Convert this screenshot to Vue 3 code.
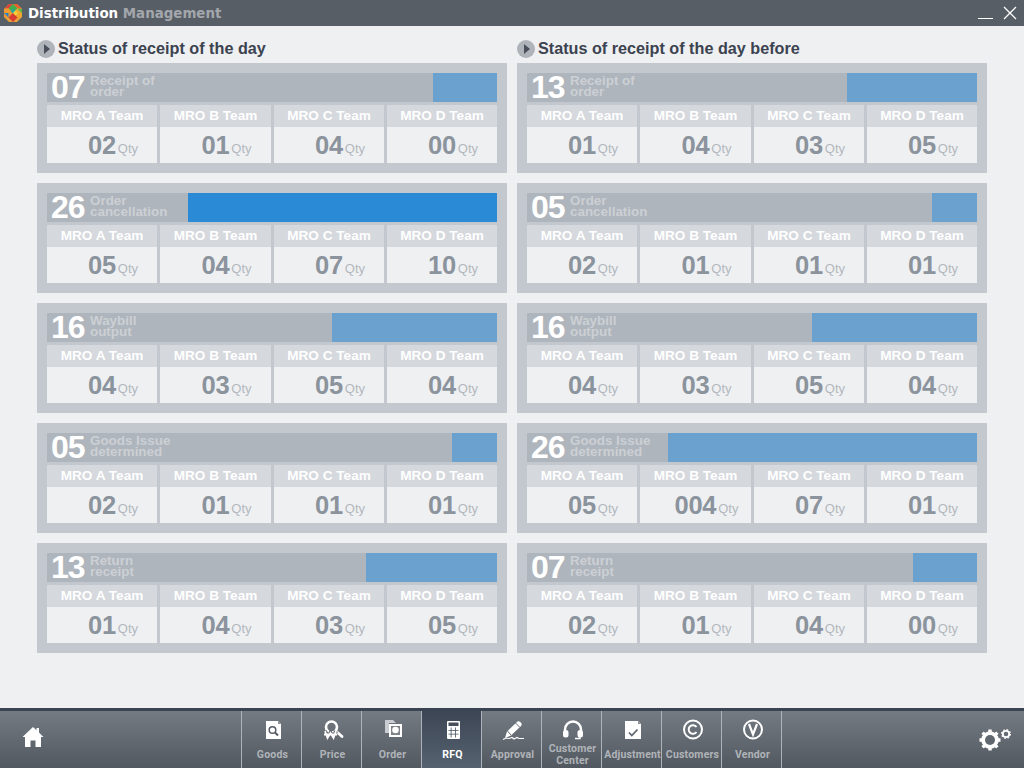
<template>
  <div class="app">
    <header class="titlebar">
      <svg class="logo" viewBox="0 0 18 18">
        <polygon points="5,0 13,0 18,5 18,13 13,18 5,18 0,13 0,5" fill="#e8a13a" />
        <polygon points="5,0 9,0 5,4.500 0.500,4.500" fill="#d8463a" />
        <polygon points="9,0 13,0 17.500,4.500 13.500,4.500" fill="#e9632c" />
        <polygon points="9,0 13.500,4.500 9,9 4.500,4.500" fill="#3fae4f" />
        <polygon points="0,5 4.500,4.500 9,9 4.500,13.500 0,13" fill="#ef9a2f" />
        <polygon points="18,5 13.500,4.500 9,9 13.500,13.500 18,13" fill="#f0a92e" />
        <polygon points="9,9 13.500,13.500 9,18 4.500,13.500" fill="#d83a34" />
        <polygon points="0,9 4.500,9 4.500,13.500" fill="#2f7fc4" />
        <polygon points="6.500,7 9,4.500 11.500,7 9,9.500" fill="#2aa5a0" />
        <polygon points="9,9 11.500,6.500 14,9 11.500,11.500" fill="#f4d23c" />
        <polygon points="13.500,4.500 18,5 18,9 15.500,7" fill="#57b847" />
      </svg>
      <span class="brand">Distribution <em>Management</em></span>
      <div class="winbtns">
        <span class="minimize"></span>
        <svg class="close" viewBox="0 0 14 14"><path d="M1 1 13 13M13 1 1 13" stroke="#fff" stroke-width="1.3" fill="none" /></svg>
      </div>
    </header>

    <main class="content">
      <section v-for="col in columns" :key="col.title" class="column">
        <h2 class="coltitle">
          <span class="arrow"></span>
          {{ col.title }}
        </h2>
        <div v-for="card in col.cards" :key="card.label" class="card">
          <div class="summary">
            <span class="total">{{ card.total }}</span>
            <span class="label">{{ card.label[0] }}<br />{{ card.label[1] }}</span>
            <span class="fill" :class="{ strong: card.strong }" :style="{ width: card.bar + 'px' }"></span>
          </div>
          <div class="teams">
            <div v-for="(qty, i) in card.qty" :key="i" class="team">
              <div class="teamname">{{ teams[i] }}</div>
              <div class="teamqty"><b>{{ qty }}</b><span>Qty</span></div>
            </div>
          </div>
        </div>
      </section>
    </main>

    <footer class="dock">
      <svg class="home" viewBox="0 0 22 22">
        <path fill="#fff" d="M11 1 14.5 4.2V2H17V6.5L21.5 11H19V21H13.5V14.5H8.5V21H3V11H.5Z" />
      </svg>
      <nav class="tabs">
        <button v-for="t in tabs" :key="t.name" class="tab" :class="{ active: t.name === 'RFQ' }">
          <svg class="tabicon" viewBox="0 0 24 24" v-html="t.icon"></svg>
          <span class="tabname">{{ t.name }}</span>
        </button>
      </nav>
      <svg class="gears" viewBox="0 0 36 24">
        <circle cx="13" cy="13" r="6.5" fill="none" stroke="#fff" stroke-width="4.5" />
        <path stroke="#fff" stroke-width="3.4" d="M13 2.500V23.500M2.500 13H23.500M5.600 5.600 20.400 20.400M20.400 5.600 5.600 20.400" />
        <circle cx="13" cy="13" r="5" fill="#60676f" />
        <circle cx="29" cy="7" r="3.200" fill="none" stroke="#fff" stroke-width="1.800" />
        <circle cx="29" cy="7" r="4.400" fill="none" stroke="#fff" stroke-width="1.200" stroke-dasharray="1.700 1.750" />
      </svg>
    </footer>
  </div>
</template>

<script setup>
const teams = ['MRO A Team', 'MRO B Team', 'MRO C Team', 'MRO D Team']

const columns = [
  {
    title: 'Status of receipt of the day',
    cards: [
      { total: '07', label: ['Receipt of', 'order'], bar: 64, qty: ['02', '01', '04', '00'] },
      { total: '26', label: ['Order', 'cancellation'], bar: 309, strong: true, qty: ['05', '04', '07', '10'] },
      { total: '16', label: ['Waybill', 'output'], bar: 165, qty: ['04', '03', '05', '04'] },
      { total: '05', label: ['Goods Issue', 'determined'], bar: 45, qty: ['02', '01', '01', '01'] },
      { total: '13', label: ['Return', 'receipt'], bar: 131, qty: ['01', '04', '03', '05'] }
    ]
  },
  {
    title: 'Status of receipt of the day before',
    cards: [
      { total: '13', label: ['Receipt of', 'order'], bar: 130, qty: ['01', '04', '03', '05'] },
      { total: '05', label: ['Order', 'cancellation'], bar: 45, qty: ['02', '01', '01', '01'] },
      { total: '16', label: ['Waybill', 'output'], bar: 165, qty: ['04', '03', '05', '04'] },
      { total: '26', label: ['Goods Issue', 'determined'], bar: 309, qty: ['05', '004', '07', '01'] },
      { total: '07', label: ['Return', 'receipt'], bar: 64, qty: ['02', '01', '04', '00'] }
    ]
  }
]

const tabs = [
  {
    name: 'Goods',
    icon: '<path fill="#fff" d="M5 3H17L20 6V21H5Z"/><path fill="#8b9096" d="M17 3 20 6H17Z"/><circle cx="11.500" cy="12" r="3.300" fill="none" stroke="#555b63" stroke-width="1.500"/><path stroke="#555b63" stroke-width="2" d="M14 14.500 17 17.500"/>'
  },
  {
    name: 'Price',
    icon: '<circle cx="10.500" cy="9" r="5.500" fill="none" stroke="#fff" stroke-width="2.600"/><path stroke="#fff" stroke-width="2.800" stroke-linecap="round" d="M16 14 21 18.500"/><path fill="none" stroke="#666c74" stroke-width="4" d="M4 13 6.500 20 9.500 15 12.500 20 15 13"/><path fill="none" stroke="#fff" stroke-width="1.800" d="M4 13 6.500 20 9.500 15 12.500 20 15 13M3 16.500H16"/>'
  },
  {
    name: 'Order',
    icon: '<path fill="#c9ccd0" d="M4 2H12L15 5H8V15H4Z"/><rect x="8" y="6" width="13" height="13" fill="#fff"/><rect x="10" y="8" width="9" height="9" fill="#7d8289"/><circle cx="14.500" cy="12" r="3.300" fill="#fff"/>'
  },
  {
    name: 'RFQ',
    icon: '<rect x="6" y="3" width="13" height="18" rx="1" fill="#fff"/><path fill="#46505d" d="M7.500 4.500H17.500V8H7.500ZM9.700 9.500H10.500V19.500H9.700ZM14 9.500H14.800V19.500H14ZM7.500 12.300H17.500V13H7.500ZM7.500 15.800H17.500V16.500H7.500Z"/>'
  },
  {
    name: 'Approval',
    icon: '<path fill="#fff" d="M16.500 3.500C18 2.500 20 4 20.500 5.500 21 6.500 20.500 7.500 20 8L10 17.500 4 20 6 13.500Z"/><path stroke="#666c74" stroke-width="1" d="M14.500 5 19 9.500M6.500 13 10 17"/><path fill="none" stroke="#fff" stroke-width="1.200" d="M2 21.500 5 20 8 20.500 11 19.500 13 21 16 19.500 18 20.500H23"/>'
  },
  {
    name: 'Customer Center',
    icon: '<path fill="none" stroke="#fff" stroke-width="2.400" d="M4 14V11.500A8 8 0 0 1 20 11.500V14"/><rect x="2" y="12" width="5.500" height="7.500" rx="2.500" fill="#fff"/><rect x="16.500" y="12" width="5.500" height="7.500" rx="2.500" fill="#fff"/><path fill="none" stroke="#fff" stroke-width="1.400" d="M19 19V20.500H14"/>'
  },
  {
    name: 'Adjustment',
    icon: '<path fill="#fff" d="M4 3H17L20 6V21H4Z"/><path fill="#8b9096" d="M17 3 20 6H17Z"/><path fill="none" stroke="#5f666e" stroke-width="1.800" d="M8 14.500 10.800 17.500 16.500 11.500"/>'
  },
  {
    name: 'Customers',
    icon: '<circle cx="12" cy="11.500" r="9" fill="none" stroke="#fff" stroke-width="2"/><path fill="none" stroke="#fff" stroke-width="2" d="M15.500 9A4.300 4.300 0 1 0 15.500 14"/>'
  },
  {
    name: 'Vendor',
    icon: '<circle cx="12" cy="11.500" r="9" fill="none" stroke="#fff" stroke-width="2"/><path fill="none" stroke="#fff" stroke-width="2.200" d="M8 6 12 16.500 16 6"/>'
  }
]
</script>

<style>
html,
body {
  margin: 0;
  background: #eff0f2;
}
</style>

<style scoped>
.app {
  width: 1024px;
  height: 768px;
  display: flex;
  flex-direction: column;
  overflow: hidden;
  background: #eff0f2;
  font-family: "Liberation Sans", Arial, sans-serif;
}
.titlebar {
  height: 26px;
  flex: none;
  display: flex;
  align-items: center;
  padding-left: 4px;
  background: #585e66;
}
.logo {
  width: 18px;
  height: 18px;
  margin-right: 6px;
}
.brand {
  font-family: "DejaVu Sans", sans-serif;
  font-weight: bold;
  font-size: 13.4px;
  color: #fff;
}
.brand em {
  font-style: normal;
  color: #a3a7ac;
}
.winbtns {
  margin-left: auto;
  display: flex;
  align-items: center;
  gap: 10px;
  padding-right: 7px;
}
.minimize {
  width: 15px;
  height: 1px;
  margin-top: 11px;
  background: #fff;
}
.close {
  width: 14px;
  height: 14px;
}
.content {
  flex: 1;
  display: flex;
  gap: 10px;
  padding: 12px 0 0 37px;
}
.column {
  width: 470px;
  display: flex;
  flex-direction: column;
  gap: 10px;
}
.coltitle {
  margin: 0 0 -6px;
  height: 21px;
  display: flex;
  align-items: center;
  gap: 3px;
  font-size: 16.2px;
  font-weight: bold;
  color: #3c4350;
}
.arrow {
  position: relative;
  width: 18px;
  height: 18px;
  border-radius: 50%;
  background: #afb4bb;
}
.arrow::after {
  content: "";
  position: absolute;
  left: 7px;
  top: 4px;
  border-left: 6px solid #4a505a;
  border-top: 5px solid transparent;
  border-bottom: 5px solid transparent;
}
.card {
  height: 110px;
  box-sizing: border-box;
  padding: 10px;
  background: #c3c8cf;
}
.summary {
  height: 29px;
  display: flex;
  align-items: center;
  background: #afb5bc;
}
.total {
  width: 43px;
  flex: none;
  box-sizing: border-box;
  padding-left: 4px;
  font-size: 32px;
  font-weight: bold;
  letter-spacing: -1px;
  color: #fff;
}
.label {
  margin-top: -2px;
  font-size: 13.4px;
  line-height: 10.5px;
  font-weight: bold;
  color: #ccd0d5;
}
.fill {
  margin-left: auto;
  height: 100%;
  background: #6ba1cf;
}
.fill.strong {
  background: #2a8ad6;
}
.teams {
  display: grid;
  grid-template-columns: 110px 111px 110px 110px;
  gap: 3px;
  margin-top: 3px;
}
.teamname {
  height: 22px;
  line-height: 21px;
  text-align: center;
  font-size: 13.6px;
  font-weight: bold;
  color: #fff;
  background: #d5d8dd;
}
.teamqty {
  height: 36px;
  display: flex;
  align-items: center;
  justify-content: center;
  gap: 2px;
  padding-left: 22px;
  box-sizing: border-box;
  background: #eff0f2;
  color: #8b939d;
}
.teamqty b {
  font-size: 25.5px;
  letter-spacing: -0.3px;
}
.teamqty span {
  margin-top: 6px;
  font-size: 13px;
  color: #b3b8be;
}
.dock {
  position: relative;
  height: 60px;
  flex: none;
  box-sizing: border-box;
  border-top: 3px solid #3b4452;
  display: flex;
  justify-content: center;
  background: linear-gradient(#747b83, #525860);
}
.home {
  position: absolute;
  left: 22px;
  top: 15px;
  width: 22px;
  height: 22px;
}
.gears {
  position: absolute;
  left: 977px;
  top: 16px;
  width: 36px;
  height: 24px;
}
.tabs {
  display: flex;
  margin-right: 1px;
  border-left: 1px solid #aeb3b9;
}
.tab {
  width: 60px;
  box-sizing: border-box;
  padding: 7px 0 0 2px;
  border: 0;
  border-right: 1px solid #aeb3b9;
  background: none;
  display: flex;
  flex-direction: column;
  align-items: center;
  font-family: "Roboto", sans-serif;
}
.tab.active {
  background: linear-gradient(#3d4654, #566270);
}
.tabicon {
  width: 24px;
  height: 24px;
  flex: none;
}
.tabname {
  height: 24px;
  margin-top: 1px;
  display: flex;
  align-items: center;
  justify-content: center;
  font-size: 10.5px;
  line-height: 12px;
  letter-spacing: 0.2px;
  font-weight: bold;
  color: #b0b4b8;
  white-space: normal;
}
.tab.active .tabname {
  color: #fff;
}
</style>
